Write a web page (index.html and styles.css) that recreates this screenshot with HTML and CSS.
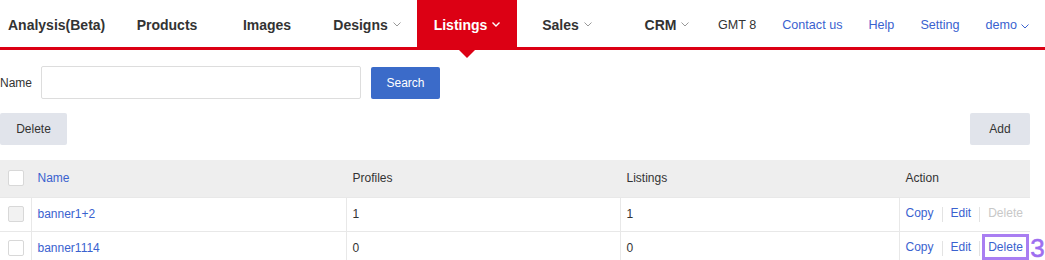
FILE: index.html
```html
<!DOCTYPE html>
<html>
	<head>
		<meta charset="UTF-8">
		<title>Listings</title>
		<link rel="stylesheet" href="styles.css">
	</head>
	<body>
		<div class="nav">
			<a class="nav-item first">Analysis(Beta)</a>
			<a class="nav-item">Products</a>
			<a class="nav-item">Images</a>
			<a class="nav-item">Designs<svg class="chev" width="8" height="5" viewBox="0 0 8 5"><polyline points="0.5,0.5 4,4 7.5,0.5"/></svg></a>
			<a class="nav-item active">Listings<svg class="chev" width="8" height="5" viewBox="0 0 8 5"><polyline points="0.5,0.5 4,4 7.5,0.5"/></svg></a>
			<a class="nav-item">Sales<svg class="chev" width="8" height="5" viewBox="0 0 8 5"><polyline points="0.5,0.5 4,4 7.5,0.5"/></svg></a>
			<a class="nav-item">CRM<svg class="chev" width="8" height="5" viewBox="0 0 8 5"><polyline points="0.5,0.5 4,4 7.5,0.5"/></svg></a>
			<div class="nav-right">
				<span class="gmt">GMT 8</span>
				<a>Contact us</a>
				<a>Help</a>
				<a>Setting</a>
				<a>demo<svg class="chev" width="8" height="5" viewBox="0 0 8 5"><polyline points="0.5,0.5 4,4 7.5,0.5"/></svg></a>
			</div>
		</div>

		<div class="search">
			<label>Name</label>
			<input type="text">
			<button class="btn-blue">Search</button>
		</div>

		<div class="toolbar">
			<button class="btn-gray">Delete</button>
			<button class="btn-gray add">Add</button>
		</div>

		<table class="list">
			<colgroup>
				<col style="width:31px">
				<col style="width:315px">
				<col style="width:274px">
				<col style="width:279px">
				<col style="width:131px">
			</colgroup>
			<tr class="head">
				<td class="ck"><span class="box"></span></td>
				<td><a>Name</a></td>
				<td>Profiles</td>
				<td>Listings</td>
				<td class="c-act">Action</td>
			</tr>
			<tr>
				<td class="ck"><span class="box dis"></span></td>
				<td><a>banner1+2</a></td>
				<td>1</td>
				<td>1</td>
				<td class="c-act"><a>Copy</a><i></i><a>Edit</a><i></i><a class="off">Delete</a></td>
			</tr>
			<tr>
				<td class="ck"><span class="box"></span></td>
				<td><a>banner1114</a></td>
				<td>0</td>
				<td>0</td>
				<td class="c-act"><a>Copy</a><i></i><a>Edit</a><i></i><a class="mark">Delete<b class="step">3</b></a></td>
			</tr>
		</table>
	</body>
</html>
```

FILE: styles.css
```css
*{
	margin: 0;
	padding: 0;
	box-sizing: border-box;
}
body{
	font-family: "Liberation Sans", Arial, sans-serif;
	font-size: 12px;
	color: #333;
	background: #fff;
	width: 1045px;
	overflow: hidden;
}
a{
	color: #3a62cf;
	text-decoration: none;
}
.nav{
	display: flex;
	height: 50px;
	padding-top: 2px;
	border-bottom: 3px solid #dc0014;
}
.nav-item{
	width: 100px;
	display: flex;
	align-items: center;
	justify-content: center;
	font-size: 14px;
	font-weight: bold;
	color: #333;
	position: relative;
	margin-top: -2px;
	padding-top: 2px;
}
.nav-item.first{
	width: 117px;
	justify-content: flex-start;
	padding-left: 8px;
}
.nav-item.active{
	background: #dc0014;
	color: #fff;
}
.nav-item.active::after{
	content: "";
	position: absolute;
	left: 42px;
	bottom: -11px;
	border-left: 8px solid transparent;
	border-right: 8px solid transparent;
	border-top: 8px solid #dc0014;
}
.chev{
	margin-left: 5px;
	fill: none;
	stroke: #999;
	stroke-width: 1;
}
.active .chev{
	stroke: #fff;
	stroke-width: 1.4;
}
.nav-right{
	display: flex;
	align-items: center;
	gap: 26px;
	margin-left: 1px;
	font-size: 12.6px;
}
.nav-right a .chev{
	stroke: #3a62cf;
	margin-left: 4px;
}
.gmt{
	color: #333;
}
.search{
	display: flex;
	align-items: center;
	margin-top: 16px;
	height: 33px;
}
.search label{
	width: 41px;
}
.search input{
	width: 320px;
	height: 33px;
	border: 1px solid #ddd;
	border-radius: 2px;
}
.btn-blue{
	margin-left: 10px;
	width: 69px;
	height: 32px;
	background: #3b6bc9;
	color: #fff;
	border: none;
	border-radius: 2px;
	font: inherit;
}
.toolbar{
	display: flex;
	justify-content: space-between;
	width: 1030px;
	margin-top: 14px;
}
.btn-gray{
	width: 67px;
	height: 32px;
	background: #e1e4eb;
	border: none;
	border-radius: 2px;
	font: inherit;
	color: #333;
}
.btn-gray.add{
	width: 60px;
}
.list{
	margin-top: 15px;
	width: 1030px;
	border-collapse: collapse;
	table-layout: fixed;
}
.list td{
	border: 1px solid #e8e8e8;
	height: 34px;
	padding: 0 6px;
	text-align: left;
}
.list tr:first-child td{
	border-top: none;
}
.list td:first-child{
	border-left: none;
}
.list td:last-child{
	border-right: none;
}
.list .head td{
	background: #eee;
	height: 37px;
	border-left-color: #eee;
	border-right-color: #eee;
}
.list .ck{
	padding: 0 0 0 8px;
}
.box{
	display: block;
	width: 16px;
	height: 16px;
	border: 1px solid #d8d8d8;
	border-radius: 2px;
	background: #fff;
}
.box.dis{
	background: #f2f2f2;
}
.c-act{
	white-space: nowrap;
}
.c-act i{
	display: inline-block;
	width: 1px;
	height: 15px;
	background: #e3e3e3;
	vertical-align: middle;
	margin: 0 8px;
}
.c-act a.off{
	color: #c8c8c8;
}
.c-act a.mark{
	position: relative;
	outline: 3px solid #a97ef2;
	outline-offset: 3px;
}
.step{
	position: absolute;
	left: 42px;
	top: -7px;
	font-size: 26px;
	font-weight: normal;
	color: #9d6ef0;
	-webkit-text-stroke: 0.5px #9d6ef0;
}
```
